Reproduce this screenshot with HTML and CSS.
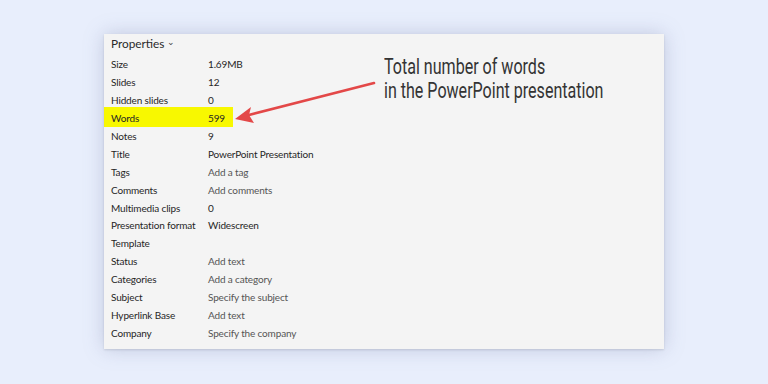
FILE: index.html
```html
<!DOCTYPE html>
<html>
<head>
<meta charset="utf-8">
<link rel="stylesheet" href="styles.css">
</head>
<body>
<div class="stage">
  <div class="panel">
    <div class="header">Properties <span class="chev">&#8964;</span></div>
    <div class="rows">
      <div class="row"><span class="label">Size</span><span class="value">1.69MB</span></div>
      <div class="row"><span class="label">Slides</span><span class="value">12</span></div>
      <div class="row"><span class="label">Hidden slides</span><span class="value">0</span></div>
      <div class="row hl"><span class="label">Words</span><span class="value">599</span></div>
      <div class="row"><span class="label">Notes</span><span class="value">9</span></div>
      <div class="row"><span class="label">Title</span><span class="value">PowerPoint Presentation</span></div>
      <div class="row"><span class="label">Tags</span><span class="value muted">Add a tag</span></div>
      <div class="row"><span class="label">Comments</span><span class="value muted">Add comments</span></div>
      <div class="row"><span class="label">Multimedia clips</span><span class="value">0</span></div>
      <div class="row"><span class="label">Presentation format</span><span class="value">Widescreen</span></div>
      <div class="row"><span class="label">Template</span><span class="value"></span></div>
      <div class="row"><span class="label">Status</span><span class="value muted">Add text</span></div>
      <div class="row"><span class="label">Categories</span><span class="value muted">Add a category</span></div>
      <div class="row"><span class="label">Subject</span><span class="value muted">Specify the subject</span></div>
      <div class="row"><span class="label">Hyperlink Base</span><span class="value muted">Add text</span></div>
      <div class="row"><span class="label">Company</span><span class="value muted">Specify the company</span></div>
    </div>
    <div class="note">Total number of words<br>in the PowerPoint presentation</div>
    <svg class="arrow" width="150" height="50" viewBox="0 0 150 50">
      <line x1="141" y1="3" x2="12" y2="36" stroke="#e34848" stroke-width="2.6" stroke-linecap="round"/>
      <polygon points="2,39 18,27 16,35 21,43" fill="#e34848"/>
    </svg>
  </div>
</div>
</body>
</html>
```
FILE: styles.css
```css
html, body {
  margin: 0;
  padding: 0;
}
body {
  width: 768px;
  height: 384px;
  background: #e8eefc;
  font-family: "Lato", "Noto Sans", sans-serif;
  overflow: hidden;
}
.stage {
  padding: 34px 0 0 104px;
}
.panel {
  position: relative;
  width: 560px;
  height: 315px;
  background: #f4f4f4;
  box-shadow: 0 0 18px rgba(120, 130, 170, 0.35), 0 1px 2px rgba(0,0,0,0.12);
  box-sizing: border-box;
}
.header {
  padding: 1px 0 0 7px;
  height: 21px;
  box-sizing: border-box;
  font-size: 11.8px;
  line-height: 18px;
  color: #2a2a2a;
}
.chev {
  font-size: 9px;
  position: relative;
  top: -3px;
  color: #444;
}
.rows {
  display: flex;
  flex-direction: column;
  margin-top: 0;
}
.row {
  display: flex;
  height: 17.95px;
  align-items: center;
  font-size: 10px;
  letter-spacing: -0.15px;
  color: #262626;
}
.row.hl {
  background: #f8f800;
  width: 129px;
  height: 20px;
  margin-top: -2px;
  padding-top: 2px;
  box-sizing: border-box;
}
.label {
  width: 104px;
  padding-left: 7px;
  box-sizing: border-box;
  flex: none;
}
.value {
  white-space: nowrap;
}
.muted {
  color: #555;
}
.note {
  position: absolute;
  left: 280px;
  top: 21px;
  font-family: "Roboto", sans-serif;
  font-size: 22px;
  line-height: 24px;
  color: #333;
  white-space: nowrap;
  transform: scaleX(0.73);
  transform-origin: left top;
}
.arrow {
  position: absolute;
  left: 129px;
  top: 46px;
}
```
